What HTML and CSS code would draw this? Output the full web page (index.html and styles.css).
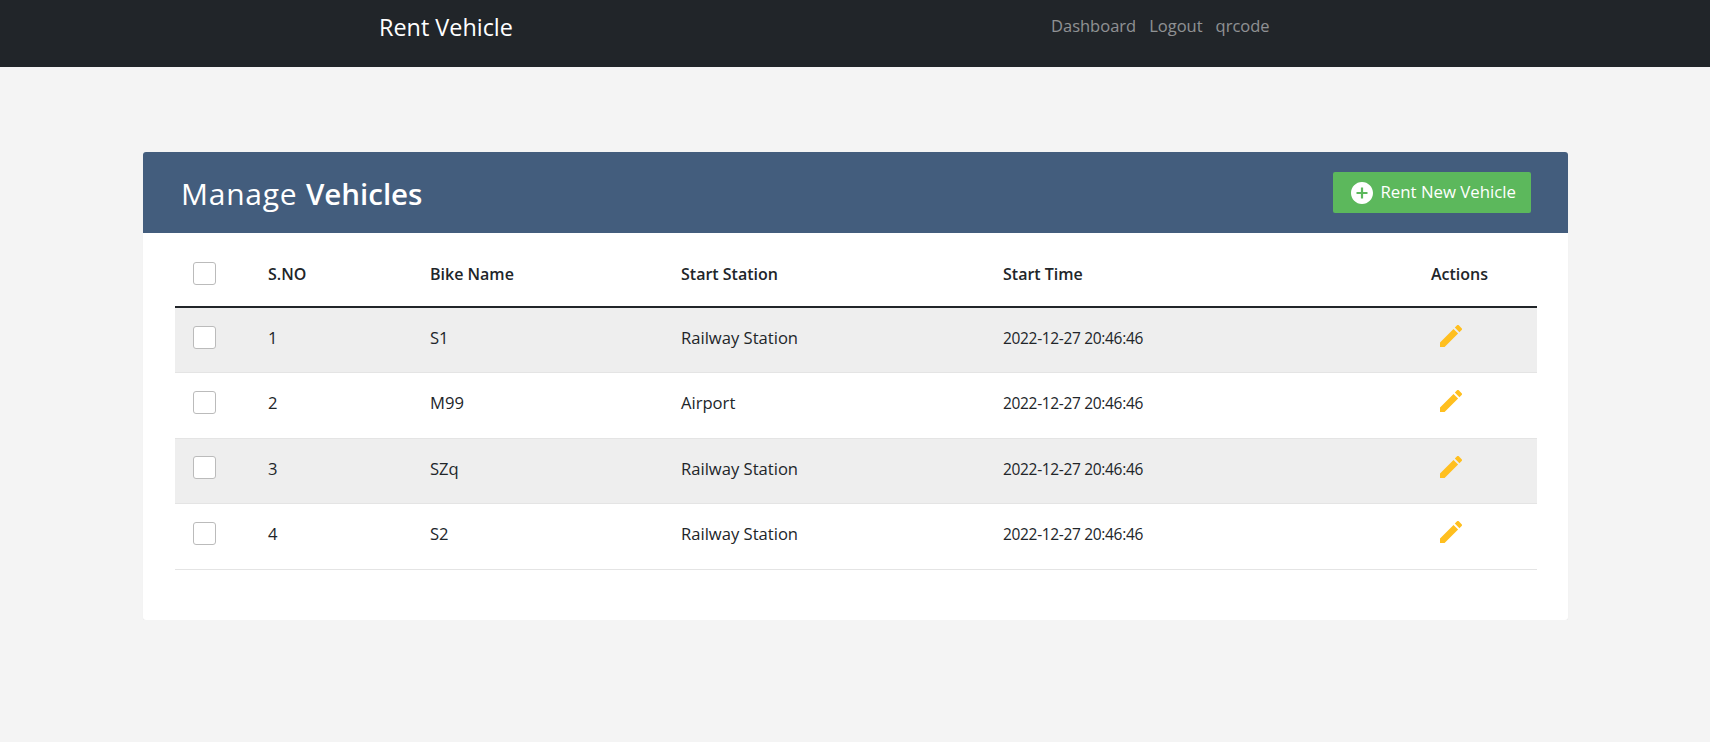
FILE: index.html
```html
<!DOCTYPE html>
<html lang="en">
<head>
    <meta charset="UTF-8">
    <meta name="viewport" content="width=device-width, initial-scale=1.0">
    <title>Manage Vehicles</title>
    <link rel="stylesheet" href="styles.css">
</head>
<body>
    <nav class="navbar">
        <a class="navbar-brand" href="#">Rent Vehicle</a>
        <ul class="nav-links">
            <li><a href="#">Dashboard</a></li>
            <li><a href="#">Logout</a></li>
            <li><a href="#">qrcode</a></li>
        </ul>
    </nav>

    <div class="table-wrapper">
        <div class="table-title">
            <h2>Manage <b>Vehicles</b></h2>
            <a href="#" class="btn-add">
                <svg class="icon-add" viewBox="2 2 20 20"><path d="M12 2C6.48 2 2 6.48 2 12s4.48 10 10 10 10-4.48 10-10S17.52 2 12 2zm5 11h-4v4h-2v-4H7v-2h4V7h2v4h4v2z"/></svg>
                <span>Rent New Vehicle</span>
            </a>
        </div>
        <div class="table-body">
            <table class="vehicle-table">
                <colgroup>
                    <col class="col-check">
                    <col class="col-sno">
                    <col class="col-bike">
                    <col class="col-station">
                    <col class="col-time">
                    <col class="col-actions">
                </colgroup>
                <thead>
                    <tr>
                        <th><span class="check"></span></th>
                        <th>S.NO</th>
                        <th>Bike Name</th>
                        <th>Start Station</th>
                        <th>Start Time</th>
                        <th>Actions</th>
                    </tr>
                </thead>
                <tbody>
                    <tr>
                        <td><span class="check"></span></td>
                        <td>1</td>
                        <td>S1</td>
                        <td>Railway Station</td>
                        <td class="time">2022-12-27 20:46:46</td>
                        <td><a href="#" class="edit"><svg viewBox="3 3 18 18"><path d="M3 17.25V21h3.75L17.81 9.94l-3.75-3.75L3 17.25zM20.71 7.04c.39-.39.39-1.02 0-1.41l-2.34-2.34c-.39-.39-1.02-.39-1.41 0l-1.83 1.83 3.75 3.75 1.83-1.83z"/></svg></a></td>
                    </tr>
                    <tr>
                        <td><span class="check"></span></td>
                        <td>2</td>
                        <td>M99</td>
                        <td>Airport</td>
                        <td class="time">2022-12-27 20:46:46</td>
                        <td><a href="#" class="edit"><svg viewBox="3 3 18 18"><path d="M3 17.25V21h3.75L17.81 9.94l-3.75-3.75L3 17.25zM20.71 7.04c.39-.39.39-1.02 0-1.41l-2.34-2.34c-.39-.39-1.02-.39-1.41 0l-1.83 1.83 3.75 3.75 1.83-1.83z"/></svg></a></td>
                    </tr>
                    <tr>
                        <td><span class="check"></span></td>
                        <td>3</td>
                        <td>SZq</td>
                        <td>Railway Station</td>
                        <td class="time">2022-12-27 20:46:46</td>
                        <td><a href="#" class="edit"><svg viewBox="3 3 18 18"><path d="M3 17.25V21h3.75L17.81 9.94l-3.75-3.75L3 17.25zM20.71 7.04c.39-.39.39-1.02 0-1.41l-2.34-2.34c-.39-.39-1.02-.39-1.41 0l-1.83 1.83 3.75 3.75 1.83-1.83z"/></svg></a></td>
                    </tr>
                    <tr>
                        <td><span class="check"></span></td>
                        <td>4</td>
                        <td>S2</td>
                        <td>Railway Station</td>
                        <td class="time">2022-12-27 20:46:46</td>
                        <td><a href="#" class="edit"><svg viewBox="3 3 18 18"><path d="M3 17.25V21h3.75L17.81 9.94l-3.75-3.75L3 17.25zM20.71 7.04c.39-.39.39-1.02 0-1.41l-2.34-2.34c-.39-.39-1.02-.39-1.41 0l-1.83 1.83 3.75 3.75 1.83-1.83z"/></svg></a></td>
                    </tr>
                </tbody>
            </table>
        </div>
    </div>
</body>
</html>
```

FILE: styles.css
```css
body {
    margin: 0;
    background-color: #f4f4f4;
    color: #212529;
    font-family: "Open Sans", Arial, sans-serif;
    font-size: 16.6px;
    line-height: 24px;
}
a {
    text-decoration: none;
}
.navbar {
    display: flex;
    height: 67px;
    background-color: #212529;
}
.navbar-brand {
    margin-left: 379px;
    padding-top: 14px;
    width: 672px;
    color: #fff;
    font-size: 23.4px;
    line-height: 26px;
}
.nav-links {
    display: flex;
    gap: 13px;
    margin: 0;
    padding: 14px 0 0;
    list-style: none;
}
.nav-links a {
    color: rgba(255, 255, 255, 0.5);
    font-size: 16.5px;
}
.table-wrapper {
    margin: 85px 142px 0 143px;
    padding-bottom: 50px;
    background-color: #fff;
    border-radius: 3px;
    box-shadow: 0 1px 1px rgba(0, 0, 0, 0.05);
}
.table-title {
    display: flex;
    justify-content: space-between;
    align-items: flex-start;
    height: 81px;
    padding: 20px 37px 0 38px;
    box-sizing: border-box;
    background-color: #435d7d;
    border-radius: 3px 3px 0 0;
    color: #fff;
}
.table-title h2 {
    margin: 2px 0 0;
    font-size: 30px;
    font-weight: 400;
    letter-spacing: 0.75px;
    line-height: 40px;
}
.table-title b {
    font-size: 29.5px;
    font-weight: 600;
    letter-spacing: 0;
}
.btn-add {
    display: flex;
    align-items: center;
    gap: 8px;
    height: 41px;
    padding: 0 15px 0 18px;
    background-color: #5cb85c;
    border-radius: 2px;
    color: #fff;
    font-size: 16.8px;
}
.btn-add span {
    margin-bottom: 2px;
}
.icon-add {
    width: 22px;
    height: 22px;
    fill: #fff;
}
.table-body {
    padding: 0 31px 0 32px;
}
.vehicle-table {
    width: 100%;
    table-layout: fixed;
    border-collapse: collapse;
}
.col-check { width: 81px; }
.col-sno { width: 162px; }
.col-bike { width: 251px; }
.col-station { width: 322px; }
.col-actions { width: 118px; }
.vehicle-table th {
    height: 74px;
    padding: 8px 12px 0;
    box-sizing: border-box;
    border-bottom: 2px solid #212529;
    font-size: 16px;
    font-weight: 600;
    text-align: left;
}
.vehicle-table td {
    height: 65.5px;
    padding: 0 12px 4px;
    box-sizing: border-box;
    border-bottom: 1px solid #e4e4e4;
}
.vehicle-table td.time {
    font-size: 15.5px;
    letter-spacing: -0.33px;
}
.vehicle-table tbody tr:nth-child(odd) {
    background-color: #eee;
}
.vehicle-table th:first-child,
.vehicle-table td:first-child {
    padding-left: 18px;
}
.check {
    display: block;
    width: 23px;
    height: 23px;
    box-sizing: border-box;
    background-color: #fff;
    border: 1px solid #bbb;
    border-radius: 3px;
}
.vehicle-table td .check {
    margin-bottom: 2px;
}
.edit {
    display: block;
    width: 22px;
    height: 22px;
    margin: 0 0 4px 9px;
}
.edit svg {
    display: block;
    width: 22px;
    height: 22px;
    fill: #ffbf1f;
}
```
